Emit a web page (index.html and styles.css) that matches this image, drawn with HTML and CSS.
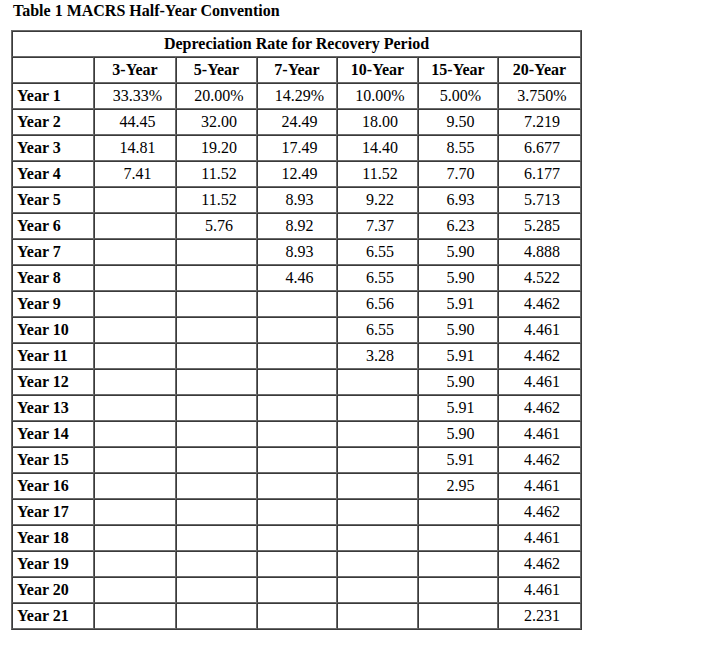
FILE: index.html
```html
<!DOCTYPE html>
<html>
<head>
<meta charset="utf-8">
<link rel="stylesheet" href="styles.css">
</head>
<body>
<div class="page">
<div class="title">Table 1 MACRS Half-Year Convention</div>
<table class="macrs">
<colgroup>
<col class="c1"><col class="c2"><col class="c3"><col class="c4"><col class="c5"><col class="c6"><col class="c7">
</colgroup>
<tr><th colspan="7">Depreciation Rate for Recovery Period</th></tr>
<tr><th></th><th>3-Year</th><th>5-Year</th><th>7-Year</th><th>10-Year</th><th>15-Year</th><th>20-Year</th></tr>
<tr><th class="yr">Year 1</th><td>33.33%</td><td>20.00%</td><td>14.29%</td><td>10.00%</td><td>5.00%</td><td>3.750%</td></tr>
<tr><th class="yr">Year 2</th><td>44.45</td><td>32.00</td><td>24.49</td><td>18.00</td><td>9.50</td><td>7.219</td></tr>
<tr><th class="yr">Year 3</th><td>14.81</td><td>19.20</td><td>17.49</td><td>14.40</td><td>8.55</td><td>6.677</td></tr>
<tr><th class="yr">Year 4</th><td>7.41</td><td>11.52</td><td>12.49</td><td>11.52</td><td>7.70</td><td>6.177</td></tr>
<tr><th class="yr">Year 5</th><td></td><td>11.52</td><td>8.93</td><td>9.22</td><td>6.93</td><td>5.713</td></tr>
<tr><th class="yr">Year 6</th><td></td><td>5.76</td><td>8.92</td><td>7.37</td><td>6.23</td><td>5.285</td></tr>
<tr><th class="yr">Year 7</th><td></td><td></td><td>8.93</td><td>6.55</td><td>5.90</td><td>4.888</td></tr>
<tr><th class="yr">Year 8</th><td></td><td></td><td>4.46</td><td>6.55</td><td>5.90</td><td>4.522</td></tr>
<tr><th class="yr">Year 9</th><td></td><td></td><td></td><td>6.56</td><td>5.91</td><td>4.462</td></tr>
<tr><th class="yr">Year 10</th><td></td><td></td><td></td><td>6.55</td><td>5.90</td><td>4.461</td></tr>
<tr><th class="yr">Year 11</th><td></td><td></td><td></td><td>3.28</td><td>5.91</td><td>4.462</td></tr>
<tr><th class="yr">Year 12</th><td></td><td></td><td></td><td></td><td>5.90</td><td>4.461</td></tr>
<tr><th class="yr">Year 13</th><td></td><td></td><td></td><td></td><td>5.91</td><td>4.462</td></tr>
<tr><th class="yr">Year 14</th><td></td><td></td><td></td><td></td><td>5.90</td><td>4.461</td></tr>
<tr><th class="yr">Year 15</th><td></td><td></td><td></td><td></td><td>5.91</td><td>4.462</td></tr>
<tr><th class="yr">Year 16</th><td></td><td></td><td></td><td></td><td>2.95</td><td>4.461</td></tr>
<tr><th class="yr">Year 17</th><td></td><td></td><td></td><td></td><td></td><td>4.462</td></tr>
<tr><th class="yr">Year 18</th><td></td><td></td><td></td><td></td><td></td><td>4.461</td></tr>
<tr><th class="yr">Year 19</th><td></td><td></td><td></td><td></td><td></td><td>4.462</td></tr>
<tr><th class="yr">Year 20</th><td></td><td></td><td></td><td></td><td></td><td>4.461</td></tr>
<tr><th class="yr">Year 21</th><td></td><td></td><td></td><td></td><td></td><td>2.231</td></tr>
</table>
</div>
</body>
</html>
```
FILE: styles.css
```css
html, body {
  margin: 0;
  padding: 0;
  background: #ffffff;
}
.page {
  padding: 2px 0 0 11px;
  font-family: "Liberation Serif", "Times New Roman", serif;
  color: #000;
}
.title {
  font-weight: bold;
  font-size: 16px;
  line-height: 18px;
  margin: 0 0 10px 2px;
}
.macrs {
  border-collapse: separate;
  border-spacing: 0;
  table-layout: fixed;
  width: 571px;
  border-top: 1px solid #6a6a6a;
  border-left: 1px solid #6a6a6a;
  border-right: 1px solid #3a3a3a;
  border-bottom: 1px solid #3a3a3a;
  font-size: 16px;
}
.c1 { width: 82px; }
.c2 { width: 82px; }
.c3 { width: 81px; }
.c4 { width: 80px; }
.c5 { width: 81px; }
.c6 { width: 80px; }
.c7 { width: 83px; }
.macrs th, .macrs td {
  border-top: 1px solid #3a3a3a;
  border-left: 1px solid #3a3a3a;
  border-right: 1px solid #6a6a6a;
  border-bottom: 1px solid #6a6a6a;
  height: 24px;
  padding: 0;
  line-height: 24px;
  box-sizing: content-box;
}
.macrs th {
  font-weight: bold;
  text-align: center;
}
.macrs th.yr {
  text-align: left;
  padding-left: 4px;
}
.macrs td {
  text-align: center;
  font-weight: normal;
  padding-left: 5px;
}
```
